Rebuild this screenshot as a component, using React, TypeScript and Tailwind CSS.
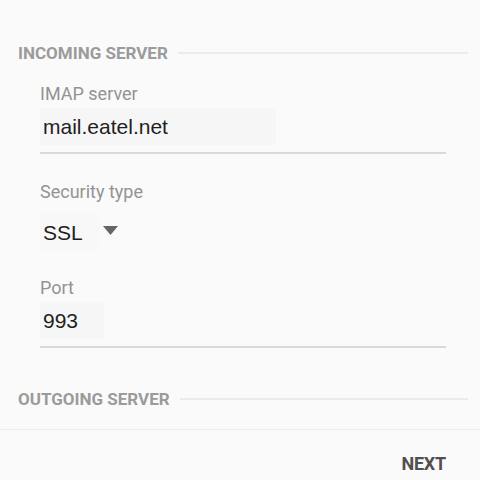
// Incoming server settings screen (account setup step).

const LABEL_FONT = { fontFamily: "Roboto, 'Liberation Sans', sans-serif" };

function SectionHeading({ title }: { title: string }) {
  return (
    <div className="flex items-center gap-[10px] pl-[18px] pr-[12px]">
      <span className="text-[17px] leading-[20px] font-bold text-[#9b9b9b] whitespace-nowrap font-['Roboto',sans-serif]">
        {title}
      </span>
      <div className="flex-1 h-[2px] bg-[#ebebeb]" />
    </div>
  );
}

function FieldLabel({ children }: { children: string }) {
  return (
    <div className="text-[18px] leading-[20px] text-[#939393] font-['Roboto',sans-serif]">
      {children}
    </div>
  );
}

function TextField({
  label,
  value,
  boxWidth,
}: {
  label: string;
  value: string;
  boxWidth: string;
}) {
  return (
    <div className="flex flex-col">
      <FieldLabel>{label}</FieldLabel>
      <div
        className={`mt-[4px] h-[37px] ${boxWidth} bg-[#f6f6f6] pl-[3px] text-[21px] leading-[37px] text-[#1f1f1f] font-['Liberation_Sans',Arial,sans-serif]`}
      >
        {value}
      </div>
      <div className="mt-[7px] h-[2px] bg-[#dadada]" />
    </div>
  );
}

export default function App() {
  return (
    <div className="w-[480px] h-[480px] bg-[#fafafa] flex flex-col overflow-hidden" style={LABEL_FONT}>
      <div className="pt-[43px]">
        <SectionHeading title="INCOMING SERVER" />
      </div>

      <div className="pl-[40px] pr-[34px] mt-[21px] flex flex-col">
        <TextField label="IMAP server" value="mail.eatel.net" boxWidth="w-[236px]" />

        <div className="mt-[28px]">
          <FieldLabel>Security type</FieldLabel>
          <div className="mt-[12px] h-[37px] flex items-center">
            <span className="w-[60px] bg-[#f8f8f8] pl-[3px] text-[21px] leading-[37px] text-[#1f1f1f] font-['Liberation_Sans',Arial,sans-serif]">
              SSL
            </span>
            <svg width="15" height="9" viewBox="0 0 15 9" className="ml-[3px] mb-[4px]">
              <path d="M0 0 H15 L7.5 9 Z" fill="#666666" />
            </svg>
          </div>
        </div>

        <div className="mt-[27px]">
          <TextField label="Port" value="993" boxWidth="w-[64px]" />
        </div>
      </div>

      <div className="mt-[41px]">
        <SectionHeading title="OUTGOING SERVER" />
      </div>

      <div className="mt-[20px] h-[1px] bg-[#ececec]" />

      <div className="flex justify-end pr-[34px] pt-[22px]">
        <span className="text-[18px] leading-[24px] font-bold text-[#505050] tracking-[-0.2px] font-['Roboto',sans-serif]">
          NEXT
        </span>
      </div>
    </div>
  );
}
